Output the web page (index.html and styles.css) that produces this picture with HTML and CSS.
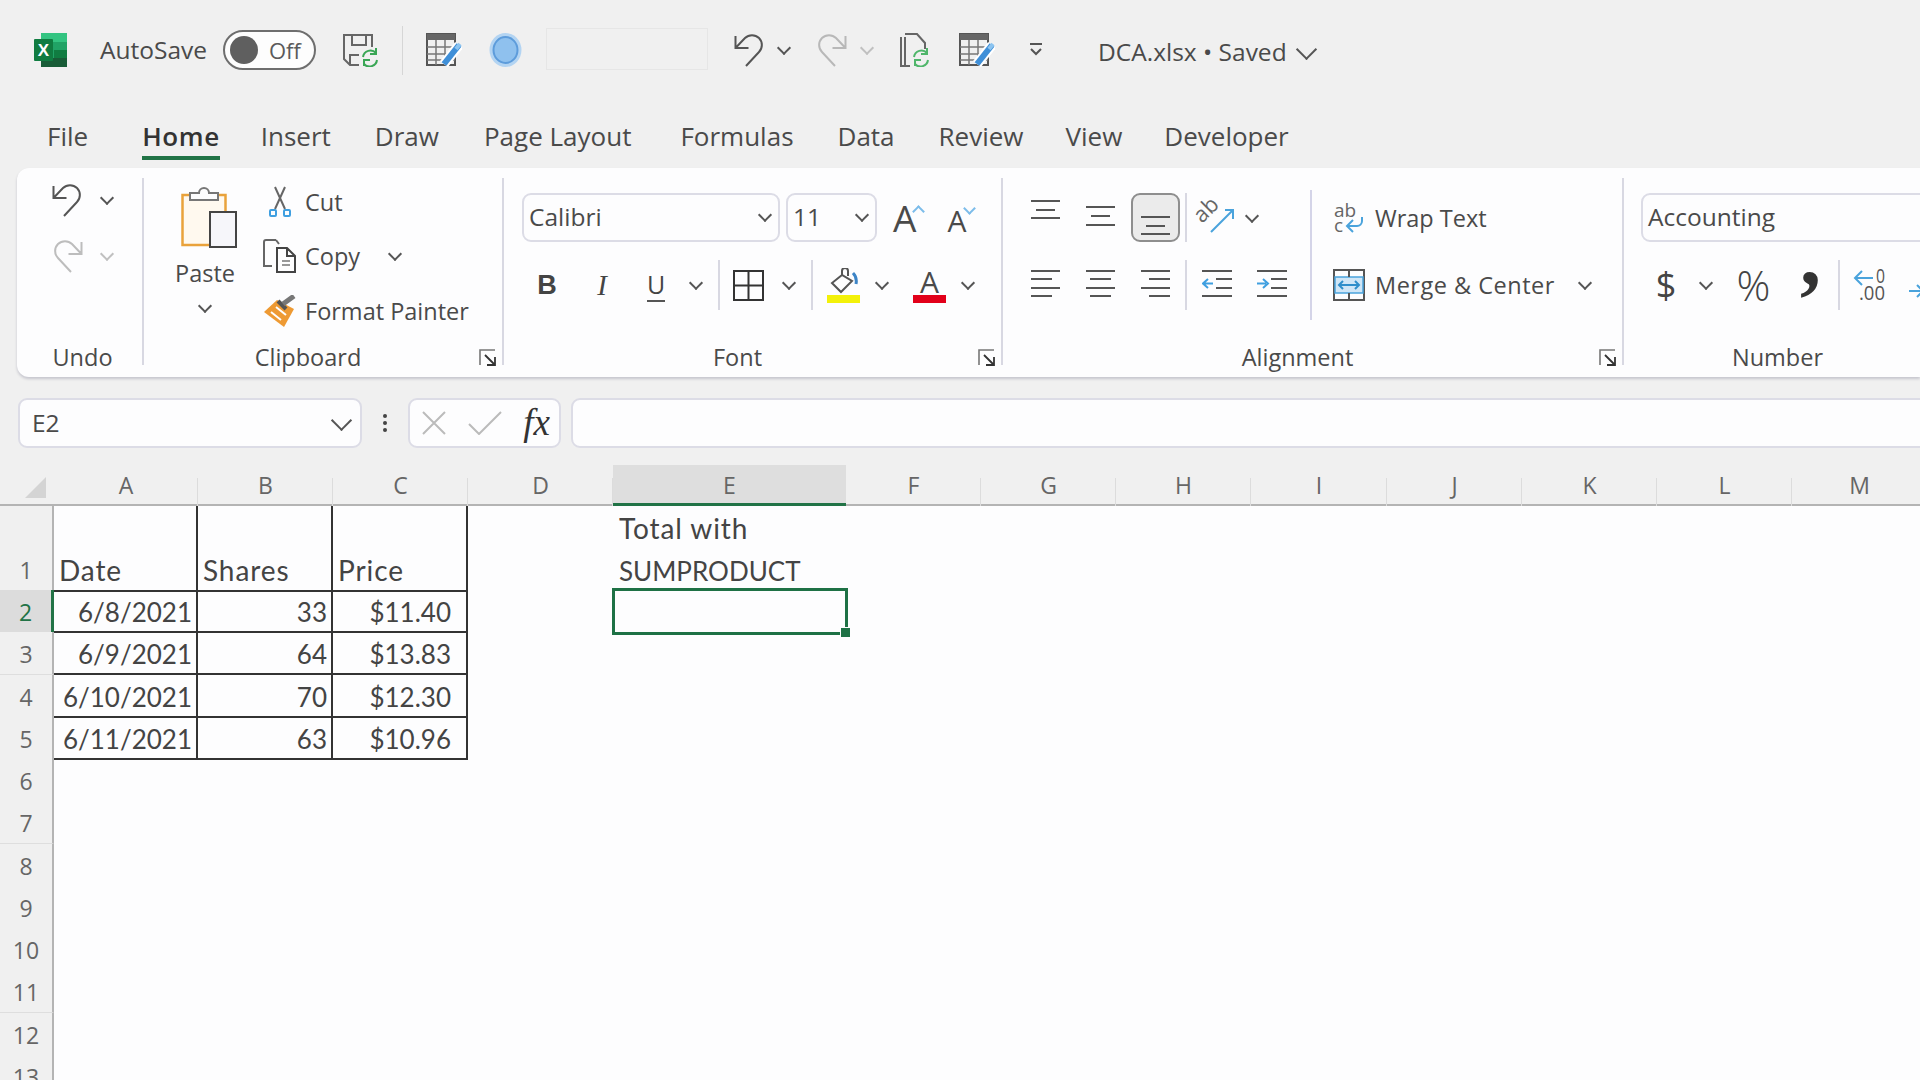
FILE: index.html
```html
<!DOCTYPE html>
<html lang="en">
<head>
    <meta charset="UTF-8">
    <title>DCA.xlsx - Excel</title>
    <link rel="stylesheet" href="styles.css">
</head>
<body>
    <!-- shared icons -->
    <svg class="defs" width="0" height="0">
        <symbol id="i-undo" viewBox="0 0 31 34">
            <path d="M1.5 3v12h13M1.5 15L11 5a10 10 0 0 1 14 0a10 10 0 0 1 0 14L12 33" fill="none" stroke="currentColor" stroke-width="2"/>
        </symbol>
        <symbol id="i-tablepen" viewBox="0 0 36 34">
            <rect x="1" y="1" width="28" height="31" fill="none" stroke="#555" stroke-width="2"/>
            <rect x="1" y="1" width="28" height="6" fill="#666"/>
            <path d="M1 14h28M1 21h28M1 27h28M10 7v25M19 7v25" stroke="#777" stroke-width="1.5"/>
            <path d="M33 12L18 31" stroke="#fff" stroke-width="10"/>
            <path d="M33 12L18 31" stroke="#3f8fd8" stroke-width="6"/>
            <path d="M34 11L30 16" stroke="#8cc4f0" stroke-width="4"/>
        </symbol>
        <symbol id="i-launcher" viewBox="0 0 17 17">
            <path d="M1 16V1h15" fill="none" stroke="#777" stroke-width="1.6"/>
            <path d="M6 6l10 10M16 8v8H8" fill="none" stroke="#333" stroke-width="1.8"/>
        </symbol>
        <symbol id="i-left" viewBox="0 0 29 50">
            <path d="M0 11h29M0 19h21M0 28h29M0 36h21" stroke="#555" stroke-width="2"/>
        </symbol>
        <symbol id="i-center" viewBox="0 0 29 50">
            <path d="M0 11h29M4 19h21M0 28h29M4 36h21" stroke="#555" stroke-width="2"/>
        </symbol>
        <symbol id="i-right" viewBox="0 0 29 50">
            <path d="M0 11h29M8 19h21M0 28h29M8 36h21" stroke="#555" stroke-width="2"/>
        </symbol>
    </svg>

    <!-- title bar -->
    <header class="titlebar">
        <svg class="logo" width="33" height="34" viewBox="0 0 33 34">
            <rect x="7" y="0" width="26" height="34" rx="2" fill="#21a366"/>
            <rect x="7" y="0" width="26" height="9" fill="#33c481"/>
            <rect x="7" y="25" width="26" height="9" fill="#185c37"/>
            <rect x="20" y="17" width="13" height="8" fill="#107c41"/>
            <rect x="0" y="6" width="19" height="22" rx="1" fill="#107c41"/>
            <text x="9.5" y="23" class="logo-x">X</text>
        </svg>
        <span class="autosave">AutoSave</span>
        <div class="toggle"><span class="knob"></span><span class="toggle-text">Off</span></div>
        <svg class="save-icon" width="37" height="34" viewBox="0 0 37 34">
            <path d="M16 32H7l-6-6V2h28v12M9 2v10h14V2M7 32V22h9" fill="none" stroke="#666" stroke-width="2"/>
            <path d="M20 24a7.500 7.500 0 0 1 13-4M34 27a7.500 7.500 0 0 1-13 4M33 15v6h-6M21 33v-6h6" fill="none" stroke="#3aa655" stroke-width="2"/>
        </svg>
        <span class="title-sep"></span>
        <svg class="pen-a" width="36" height="34"><use href="#i-tablepen"/></svg>
        <svg class="dot-icon" width="33" height="36" viewBox="0 0 33 36">
            <ellipse cx="16.500" cy="18" rx="16" ry="17" fill="#b3d4f2"/>
            <ellipse cx="16.500" cy="18" rx="12" ry="13" fill="#8fc1ee" stroke="#5d9cdb" stroke-width="2"/>
        </svg>
        <span class="blank-box"></span>
        <svg class="undo-a" width="35" height="34"><use href="#i-undo"/></svg>
        <span class="chev chev-a"></span>
        <svg class="redo-a" width="33" height="34"><use href="#i-undo"/></svg>
        <span class="chev off chev-b"></span>
        <svg class="doc-sync" width="33" height="34" viewBox="0 0 33 34">
            <path d="M5 33H1V4M5 4v29h5M5 1h12l8 9v6" fill="none" stroke="#666" stroke-width="2"/>
            <path d="M14 24a7.500 7.500 0 0 1 13-4M28 27a7.500 7.500 0 0 1-13 4M27 15v6h-6M15 33v-6h6" fill="none" stroke="#4fb66a" stroke-width="2"/>
        </svg>
        <svg class="pen-b" width="36" height="34"><use href="#i-tablepen"/></svg>
        <svg class="customise" width="16" height="16" viewBox="0 0 16 16">
            <path d="M2 2h12" stroke="#555" stroke-width="2"/>
            <path d="M3 7l5 5 5-5" fill="none" stroke="#555" stroke-width="2"/>
        </svg>
        <span class="doc-title">DCA.xlsx • Saved</span>
        <span class="chev big title-chev"></span>
    </header>

    <!-- tabs -->
    <nav class="tabs">
        <span class="tab tab-file">File</span>
        <span class="tab active">Home</span>
        <span class="tab tab-insert">Insert</span>
        <span class="tab">Draw</span>
        <span class="tab tab-page">Page Layout</span>
        <span class="tab tab-formulas">Formulas</span>
        <span class="tab">Data</span>
        <span class="tab">Review</span>
        <span class="tab tab-view">View</span>
        <span class="tab tab-dev">Developer</span>
    </nav>

    <!-- ribbon -->
    <section class="ribbon">
        <div class="group g-undo">
            <div class="group-body undo-body">
                <div class="undo-row">
                    <svg width="31" height="34"><use href="#i-undo"/></svg>
                    <span class="chev"></span>
                </div>
                <div class="undo-row disabled">
                    <svg class="mirror" width="31" height="34"><use href="#i-undo"/></svg>
                    <span class="chev off"></span>
                </div>
            </div>
            <div class="group-foot undo-foot"><span class="group-label">Undo</span></div>
        </div>

        <div class="group g-clip">
            <div class="group-body clip-body">
                <div class="paste">
                    <svg class="paste-icon" width="56" height="61" viewBox="0 0 56 61">
                        <rect x="1.500" y="8" width="43" height="50" fill="#fff9ef" stroke="#e9a23b" stroke-width="2.500"/>
                        <path d="M9 13V6h9a5 5 0 0 1 10 0h9v7z" fill="#fdfdfe" stroke="#777" stroke-width="2"/>
                        <rect x="29" y="25" width="26" height="35" fill="#f6f6fa" stroke="#444" stroke-width="2"/>
                    </svg>
                    <span class="paste-text">Paste</span>
                    <span class="chev"></span>
                </div>
                <div class="clip-actions">
                    <div class="clip-row">
                        <span class="clip-icon">
                            <svg width="22" height="32" viewBox="0 0 22 32">
                                <path d="M16 1L6 23M6 1l10 22" stroke="#666" stroke-width="2"/>
                                <rect x="1" y="24" width="6" height="6" rx="1" fill="none" stroke="#3f9fe0" stroke-width="2"/>
                                <rect x="15" y="24" width="6" height="6" rx="1" fill="none" stroke="#3f9fe0" stroke-width="2"/>
                            </svg>
                        </span>
                        <span>Cut</span>
                    </div>
                    <div class="clip-row">
                        <span class="clip-icon">
                            <svg width="34" height="34" viewBox="0 0 34 34">
                                <path d="M13 1H3a2 2 0 0 0-2 2v24h8M13 1l3 4" fill="none" stroke="#666" stroke-width="2"/>
                                <path d="M14 9h10l8 8v16H14zM24 9v8h8" fill="#fdfdfe" stroke="#444" stroke-width="2"/>
                                <path d="M19 22h8M19 26h8" stroke="#777" stroke-width="1.500"/>
                            </svg>
                        </span>
                        <span>Copy</span>
                        <span class="chev copy-chev"></span>
                    </div>
                    <div class="clip-row painter-row">
                        <span class="clip-icon">
                            <svg width="32" height="32" viewBox="0 0 32 32">
                                <path d="M0 17L13 5l17 9-10 18z" fill="#ee9a33"/>
                                <path d="M7 17l10 8M12 12l10 8" stroke="#fff" stroke-width="2"/>
                                <path d="M14 6l8 8" stroke="#555" stroke-width="4"/>
                                <path d="M19 9l11-8" stroke="#777" stroke-width="5"/>
                            </svg>
                        </span>
                        <span>Format Painter</span>
                    </div>
                </div>
            </div>
            <div class="group-foot">
                <span class="group-label">Clipboard</span>
                <svg class="launcher" width="17" height="17"><use href="#i-launcher"/></svg>
            </div>
        </div>

        <div class="group g-font">
            <div class="group-body font-body">
                <div class="font-top">
                    <div class="box font-name"><span>Calibri</span><span class="chev"></span></div>
                    <div class="box font-size"><span>11</span><span class="chev"></span></div>
                    <div class="grow grow-big"><span class="letter big-a">A</span><span class="chev blue up"></span></div>
                    <div class="grow grow-small"><span class="letter small-a">A</span><span class="chev blue"></span></div>
                </div>
                <div class="font-bottom">
                    <span class="fmt fmt-b">B</span>
                    <span class="fmt fmt-i">I</span>
                    <span class="fmt fmt-u">U</span>
                    <span class="chev"></span>
                    <span class="vsep"></span>
                    <svg width="31" height="31" viewBox="0 0 31 31">
                        <path d="M1 1h29v29H1zM15.500 1v29M1 15.500h29" fill="none" stroke="#333" stroke-width="2"/>
                    </svg>
                    <span class="chev"></span>
                    <span class="vsep"></span>
                    <div class="color-btn">
                        <svg width="28" height="26" viewBox="0 0 28 26">
                            <path d="M12 7L2 15l9 9 11-11zM12 7V3a3 3 0 0 1 6 0v5" fill="none" stroke="#555" stroke-width="2"/>
                            <path d="M23 5c3 3 4 6 3 11" fill="none" stroke="#3c84c6" stroke-width="3"/>
                        </svg>
                        <span class="color-bar yellow"></span>
                    </div>
                    <span class="chev"></span>
                    <div class="color-btn">
                        <span class="letter color-a">A</span>
                        <span class="color-bar red"></span>
                    </div>
                    <span class="chev"></span>
                </div>
            </div>
            <div class="group-foot">
                <span class="group-label">Font</span>
                <svg class="launcher" width="17" height="17"><use href="#i-launcher"/></svg>
            </div>
        </div>

        <div class="group g-align">
            <div class="group-body align-body">
                <div class="align-grid">
                    <svg width="29" height="49" viewBox="0 0 29 49"><path d="M0 8h29M5 17h19M0 25h29" stroke="#555" stroke-width="2"/></svg>
                    <svg width="29" height="49" viewBox="0 0 29 49"><path d="M0 14h29M5 23h19M0 32h29" stroke="#555" stroke-width="2"/></svg>
                    <div class="align-active">
                        <svg width="29" height="47" viewBox="0 0 29 47"><path d="M0 22h29M5 31h19M0 39h29" stroke="#555" stroke-width="2"/></svg>
                    </div>
                    <span class="vsep short"></span>
                    <svg class="orient" width="34" height="34" viewBox="0 0 34 34">
                        <text class="orient-text" transform="translate(2 23) rotate(-45)">ab</text>
                        <path d="M11 31L33 9M25 9h8v9" fill="none" stroke="#4aa3dc" stroke-width="2"/>
                    </svg>
                    <span class="chev orient-chev"></span>

                    <svg width="29" height="50"><use href="#i-left"/></svg>
                    <svg width="29" height="50"><use href="#i-center"/></svg>
                    <svg width="29" height="50"><use href="#i-right"/></svg>
                    <span class="vsep"></span>
                    <svg width="30" height="50" viewBox="0 0 30 50">
                        <path d="M0 11h30M14 19h16M14 28h16M0 36h30" stroke="#555" stroke-width="2"/>
                        <path d="M11 23.500H2M6 19l-5 4.500 5 4.500" fill="none" stroke="#3f9fe0" stroke-width="2"/>
                    </svg>
                    <svg width="30" height="50" viewBox="0 0 30 50">
                        <path d="M0 11h30M14 19h16M14 28h16M0 36h30" stroke="#555" stroke-width="2"/>
                        <path d="M0 23.500h9M6 19l5 4.500-5 4.500" fill="none" stroke="#3f9fe0" stroke-width="2"/>
                    </svg>
                </div>
                <span class="align-sep"></span>
                <div class="merge-col">
                    <div class="merge-row">
                        <span class="merge-icon">
                            <svg class="wrap-icon" width="30" height="31" viewBox="0 0 30 31">
                                <text class="wrap-text" x="0" y="14">ab</text>
                                <text class="wrap-text" x="0" y="29">c</text>
                                <path d="M28 14v4a5 5 0 0 1-5 5H13M19 17l-6 6 6 6" fill="none" stroke="#4aa3dc" stroke-width="2"/>
                            </svg>
                        </span>
                        <span>Wrap Text</span>
                    </div>
                    <div class="merge-row">
                        <span class="merge-icon">
                            <svg width="32" height="32" viewBox="0 0 32 32">
                                <rect x="1" y="1" width="30" height="30" fill="#fdfdfe" stroke="#555" stroke-width="2"/>
                                <rect x="2" y="8" width="28" height="16" fill="#cfe6f7" stroke="#4aa3dc" stroke-width="1.500"/>
                                <path d="M16 1v7M16 24v7" stroke="#555" stroke-width="2"/>
                                <path d="M6 16h20M10 12l-4 4 4 4M22 12l4 4-4 4" fill="none" stroke="#2f8ecb" stroke-width="2"/>
                            </svg>
                        </span>
                        <span class="merge-text">Merge &amp; Center</span>
                        <span class="chev merge-chev"></span>
                    </div>
                </div>
            </div>
            <div class="group-foot">
                <span class="group-label">Alignment</span>
                <svg class="launcher" width="17" height="17"><use href="#i-launcher"/></svg>
            </div>
        </div>

        <div class="group g-number">
            <div class="group-body number-body">
                <div class="box number-format"><span>Accounting</span></div>
                <div class="number-bottom">
                    <span class="fmt fmt-cur">$</span>
                    <span class="chev"></span>
                    <span class="fmt fmt-pct">%</span>
                    <span class="fmt fmt-comma">,</span>
                    <span class="vsep"></span>
                    <svg width="32" height="34" viewBox="0 0 32 34">
                        <path d="M20 10H2M9 3l-7 7 7 7" fill="none" stroke="#4aa3dc" stroke-width="2"/>
                        <text class="dec-text" x="23" y="15" textLength="9" lengthAdjust="spacingAndGlyphs">0</text>
                        <text class="dec-text" x="6" y="32" textLength="26" lengthAdjust="spacingAndGlyphs">.00</text>
                    </svg>
                    <svg width="32" height="34" viewBox="0 0 32 34">
                        <path d="M0 23h14M8 17l6 6-6 6" fill="none" stroke="#4aa3dc" stroke-width="2"/>
                    </svg>
                </div>
            </div>
            <div class="group-foot number-foot"><span class="group-label">Number</span></div>
        </div>
    </section>

    <!-- formula bar -->
    <div class="formula-row">
        <div class="box name-box"><span>E2</span><span class="chev big"></span></div>
        <div class="dots"><i></i><i></i><i></i></div>
        <div class="box fx-box">
            <svg width="24" height="24" viewBox="0 0 24 24"><path d="M1 1l22 22M23 1L1 23" stroke="#bbb" stroke-width="2"/></svg>
            <svg width="34" height="24" viewBox="0 0 34 24"><path d="M1 13l10 10L33 1" fill="none" stroke="#bbb" stroke-width="2"/></svg>
            <span class="fx">fx</span>
        </div>
        <div class="box formula-input"></div>
    </div>

    <!-- sheet -->
    <main class="sheet">
        <div class="col-heads">
            <span class="corner"><svg width="21" height="21" viewBox="0 0 21 21"><path d="M21 0v21H0z" fill="#d4d4d4"/></svg></span>
            <span class="col">A</span><span class="col">B</span><span class="col">C</span>
            <span class="col">D</span><span class="col selected">E</span><span class="col">F</span>
            <span class="col">G</span><span class="col">H</span><span class="col">I</span>
            <span class="col">J</span><span class="col">K</span><span class="col">L</span><span class="col">M</span>
        </div>

        <div class="row row-tall">
            <span class="row-head">1</span>
            <span class="cell bordered text">Date</span>
            <span class="cell bordered text">Shares</span>
            <span class="cell bordered text">Price</span>
            <span class="cell"></span>
            <span class="cell wrapped"><span class="text">Total with</span><br>SUMPRODUCT</span>
        </div>
        <div class="row">
            <span class="row-head current">2</span>
            <span class="cell bordered num">6/8/2021</span>
            <span class="cell bordered num">33</span>
            <span class="cell bordered num money">$11.40</span>
            <span class="cell"></span>
            <span class="cell active-cell"><span class="selection"><i class="handle"></i></span></span>
        </div>
        <div class="row">
            <span class="row-head">3</span>
            <span class="cell bordered num">6/9/2021</span>
            <span class="cell bordered num">64</span>
            <span class="cell bordered num money">$13.83</span>
        </div>
        <div class="row">
            <span class="row-head">4</span>
            <span class="cell bordered num">6/10/2021</span>
            <span class="cell bordered num">70</span>
            <span class="cell bordered num money">$12.30</span>
        </div>
        <div class="row">
            <span class="row-head">5</span>
            <span class="cell bordered num">6/11/2021</span>
            <span class="cell bordered num">63</span>
            <span class="cell bordered num money">$10.96</span>
        </div>
        <div class="row"><span class="row-head">6</span></div>
        <div class="row"><span class="row-head">7</span></div>
        <div class="row"><span class="row-head">8</span></div>
        <div class="row"><span class="row-head">9</span></div>
        <div class="row"><span class="row-head">10</span></div>
        <div class="row"><span class="row-head">11</span></div>
        <div class="row"><span class="row-head">12</span></div>
        <div class="row"><span class="row-head">13</span></div>
    </main>
</body>
</html>
```

FILE: styles.css
```css
* {
    box-sizing: border-box;
}

html, body {
    margin: 0;
    height: 1080px;
    overflow: hidden;
}

body {
    font-family: "Open Sans", sans-serif;
    font-size: 24.5px;
    color: #4a4a4a;
    background: #f0f0f0;
}

.defs {
    position: absolute;
}

svg {
    display: block;
    flex: none;
}

.mirror {
    transform: scaleX(-1);
}

/* chevrons */
.chev {
    display: flex;
    align-items: center;
    justify-content: center;
    flex: none;
    width: 12px;
    height: 12px;
}

.chev::before {
    content: "";
    width: 8px;
    height: 8px;
    margin-top: -4px;
    border-right: 2px solid #555;
    border-bottom: 2px solid #555;
    transform: rotate(45deg);
}

.chev.off::before {
    border-color: #c0c0c0;
}

.chev.big {
    width: 18px;
    height: 18px;
}

.chev.big::before {
    width: 13px;
    height: 13px;
}

.chev.blue::before {
    width: 7px;
    height: 7px;
    border-color: #7cbcea;
}

.chev.up {
    transform: rotate(180deg);
}

/* title bar */
.titlebar {
    display: flex;
    align-items: center;
    height: 100px;
    padding-left: 34px;
}

.logo-x {
    font: bold 17px "Liberation Sans", sans-serif;
    fill: #fff;
    text-anchor: middle;
}

.autosave {
    width: 108px;
    margin-left: 33px;
    margin-top: -1px;
    white-space: nowrap;
}

.toggle {
    display: flex;
    align-items: center;
    width: 93px;
    height: 40px;
    margin-left: 15px;
    padding-left: 5px;
    background: #fdfdfd;
    border: 2px solid #6e6e6e;
    border-radius: 20px;
}

.knob {
    width: 28px;
    height: 28px;
    background: #5f5f5f;
    border-radius: 50%;
}

.toggle-text {
    margin-left: 11px;
    font-size: 22px;
    color: #5a5a5a;
}

.save-icon { margin-left: 27px; }
.pen-a { margin-left: 23px; }
.dot-icon { margin-left: 27px; }
.undo-a { margin-left: 24px; color: #555; }
.chev-a { margin-left: 11px; }
.redo-a { margin-left: 25px; color: #b8b8b8; transform: scaleX(-1); }
.chev-b { margin-left: 13px; }
.doc-sync { margin-left: 27px; }
.pen-b { margin-left: 26px; }
.customise { margin-left: 33px; }

.title-sep {
    width: 1px;
    height: 49px;
    margin-left: 22px;
    background: #d6d6d6;
}

.blank-box {
    width: 162px;
    height: 42px;
    margin: -3px 0 0 24px;
    border: 1px solid #e6e6e6;
}

.doc-title {
    width: 188px;
    margin-left: 54px;
    margin-top: 2px;
    white-space: nowrap;
}

.title-chev {
    margin-left: 11px;
    margin-top: 2px;
}

/* tabs */
.tabs {
    display: flex;
    gap: 44px;
    height: 68px;
    padding: 20px 0 0 47px;
    font-size: 26px;
}

.tab {
    height: 40px;
    line-height: 32px;
    white-space: nowrap;
}

.tab-file { margin-right: 10px; }
.tab-insert { margin-left: -3px; }
.tab-page { margin-left: 1px; }
.tab-formulas { margin-left: 5px; }
.tab-view { margin-left: -2px; }
.tab-dev { margin-left: -2px; }

.tab.active {
    color: #333;
    font-weight: 600;
    letter-spacing: 0.6px;
    border-bottom: 4px solid #217346;
}

/* ribbon */
.ribbon {
    display: flex;
    height: 209px;
    margin-left: 17px;
    padding: 10px 0 12px;
    background: #fdfdfe;
    border-radius: 12px 0 0 12px;
    box-shadow: 0 2px 3px rgba(0, 0, 50, 0.18);
}

.group {
    display: flex;
    flex-direction: column;
    flex: none;
    height: 187px;
    border-right: 2px solid #d8d8e2;
}

.g-undo { width: 127px; }
.g-clip { width: 360px; }
.g-font { width: 499px; }
.g-align { width: 621px; }

.g-number {
    flex: 1;
    min-width: 0;
    border-right: none;
}

.group-body {
    flex: 1;
    min-height: 0;
}

.group-foot {
    display: flex;
    align-items: center;
    flex: none;
    height: 24px;
    margin-bottom: -4px;
}

.group-label {
    flex: 1;
    font-size: 23.5px;
    line-height: 24px;
    text-align: center;
    white-space: nowrap;
}

.launcher {
    margin: 0 6px 0 7px;
}

.undo-foot {
    padding-left: 6px;
}

.number-foot {
    padding-left: 11px;
}

/* undo group */
.undo-body {
    display: flex;
    flex-direction: column;
    gap: 22px;
    padding: 5px 0 0 35px;
}

.undo-row {
    display: flex;
    align-items: center;
    gap: 18px;
    color: #555;
}

.undo-row.disabled {
    color: #bdbdbd;
}

/* clipboard group */
.clip-body {
    display: flex;
}

.paste {
    display: flex;
    flex-direction: column;
    align-items: center;
    width: 70px;
    margin-left: 26px;
    padding-top: 9px;
}

.paste-icon {
    margin-left: 8px;
}

.paste-text {
    margin-top: 11px;
    font-size: 23.5px;
    line-height: 28px;
}

.paste .chev {
    margin-top: 15px;
}

.clip-actions {
    display: flex;
    flex-direction: column;
    gap: 20px;
    margin-left: 23px;
    padding-top: 7px;
}

.clip-row {
    display: flex;
    align-items: center;
    height: 34px;
    font-size: 23.5px;
    white-space: nowrap;
}

.painter-row {
    margin-top: 1px;
}

.clip-icon {
    display: flex;
    justify-content: center;
    width: 34px;
    margin-right: 8px;
}

.copy-chev {
    margin-left: 29px;
}

/* font group */
.box {
    display: flex;
    align-items: center;
    justify-content: space-between;
    flex: none;
    height: 49px;
    padding: 0 7px 2px 5px;
    background: #fdfdfe;
    border: 2px solid #dcdce6;
    border-radius: 9px;
}

.font-body {
    padding-top: 15px;
}

.font-top {
    display: flex;
    align-items: center;
    height: 49px;
    padding-left: 18px;
}

.font-name { width: 258px; }
.font-size { width: 91px; margin-left: 6px; }

.grow {
    display: flex;
    align-items: flex-start;
}

.grow-big { margin-left: 16px; }
.grow-small { margin-left: 22px; }

.letter {
    font-weight: 400;
    line-height: 1;
}

.big-a { font-size: 37px; }
.small-a { font-size: 30px; margin-top: 6px; }

.grow .chev {
    margin: 5px 0 0 -3px;
}

.font-bottom {
    display: grid;
    grid-template-columns: 44px 66px 42px 38px 8px 51px 30px 16px 47px 30px 65px 12px;
    align-items: center;
    justify-items: center;
    height: 50px;
    margin: 18px 0 0 21px;
}

.vsep {
    width: 2px;
    height: 50px;
    background: #d8d8e2;
}

.vsep.short {
    height: 49px;
}

.fmt {
    line-height: 34px;
    color: #444;
}

.fmt-b {
    font-family: "Liberation Sans", sans-serif;
    font-weight: 700;
    font-size: 27px;
}

.fmt-i {
    font-family: "Liberation Serif", serif;
    font-style: italic;
    font-size: 29px;
}

.fmt-u {
    font-size: 25px;
    line-height: 31px;
    border-bottom: 2px solid #555;
}

.color-btn {
    display: flex;
    flex-direction: column;
    align-items: center;
    height: 35px;
}

.color-a {
    font-size: 30px;
    height: 26px;
    line-height: 27px;
}

.color-bar {
    width: 33px;
    height: 8px;
    margin-top: 1px;
}

.yellow { background: #f3f10a; }
.red { background: #e2001a; }

/* alignment group */
.align-body {
    display: flex;
    padding-top: 12px;
}

.align-grid {
    display: grid;
    grid-template-columns: 55px 55px 55px 6px 55px 56px;
    grid-template-rows: 49px 50px;
    row-gap: 18px;
    align-items: center;
    justify-items: center;
    margin: 3px 0 0 15px;
}

.align-active {
    width: 49px;
    height: 49px;
    background: #ebebeb;
    border: 2px solid #8e8e8e;
    border-radius: 9px;
    display: flex;
    justify-content: center;
}

.orient, .wrap-icon {
    overflow: visible;
}

.orient-text {
    font-size: 22px;
    fill: #666;
}

.orient-chev {
    justify-self: start;
    margin-left: 2px;
}

.align-sep {
    flex: none;
    width: 2px;
    height: 130px;
    margin-left: 10px;
    background: #d4d4e8;
}

.merge-col {
    display: grid;
    grid-template-rows: 50px 50px;
    row-gap: 17px;
    margin-top: 3px;
    padding-left: 20px;
}

.merge-row {
    display: flex;
    align-items: center;
    font-size: 23.5px;
    white-space: nowrap;
}

.merge-icon {
    display: flex;
    justify-content: center;
    width: 34px;
    margin-right: 9px;
}

.merge-text {
    letter-spacing: 0.5px;
}

.wrap-text {
    font-size: 19px;
    fill: #666;
}

.merge-chev {
    margin-left: 24px;
}

/* number group */
.number-body {
    min-width: 0;
    overflow: hidden;
    padding-top: 15px;
}

.number-format {
    width: 400px;
    margin-left: 17px;
}

.number-bottom {
    display: grid;
    grid-template-columns: 50px 30px 65px 49px 8px 51px 62px;
    align-items: center;
    justify-items: center;
    height: 50px;
    margin: 18px 0 0 17px;
}

.fmt-cur {
    font-size: 36px;
}

.fmt-pct {
    font-size: 42px;
    font-weight: 300;
}

.fmt-comma {
    font-family: "Liberation Serif", serif;
    font-weight: 700;
    font-size: 84px;
    line-height: 1;
    margin-top: -58px;
    color: #333;
}

.dec-text {
    font-size: 20px;
    fill: #555;
}

/* formula bar */
.formula-row {
    display: flex;
    height: 50px;
    margin-top: 21px;
    padding-left: 18px;
    overflow: hidden;
}

.name-box {
    width: 344px;
    height: 50px;
    padding: 0 10px 2px 12px;
}

.dots {
    display: flex;
    flex: none;
    flex-direction: column;
    align-items: center;
    justify-content: center;
    gap: 3px;
    width: 46px;
}

.dots i {
    width: 4px;
    height: 4px;
    background: #444;
    border-radius: 50%;
}

.fx-box {
    width: 153px;
    height: 50px;
    padding: 0 9px 0 12px;
}

.fx {
    font-family: "Liberation Serif", serif;
    font-style: italic;
    font-size: 37px;
    line-height: 40px;
    color: #333;
}

.formula-input {
    width: 1400px;
    height: 50px;
    margin-left: 10px;
}

/* sheet */
.sheet {
    margin-top: 17px;
    overflow: hidden;
    background: #fdfdfe;
    font-family: Lato, sans-serif;
    font-size: 26px;
    color: #444;
}

.col-heads {
    display: grid;
    grid-template-columns: 54px 144px 135px 135px 145px 233px 135px 135px 135px 136px 135px 135px 135px 135px;
    height: 41px;
    background: #f0f0f0;
    border-bottom: 2px solid #b4b4b4;
    font-family: "Open Sans", sans-serif;
    font-size: 23px;
    color: #666;
}

.corner {
    display: flex;
    justify-content: flex-end;
    padding: 12px 8px 0 0;
}

.col {
    padding-top: 5px;
    line-height: 30px;
    text-align: center;
    background: linear-gradient(#dcdcdc, #dcdcdc) right bottom / 1px 28px no-repeat;
}

.col.selected {
    height: 41px;
    background: #dedede;
    border-bottom: 3px solid #217346;
}

.row {
    display: grid;
    grid-template-columns: 54px 144px 135px 135px 145px 233px;
    height: 42.25px;
}

.row-tall {
    height: 84px;
}

.row-head {
    padding-top: 2px;
    font-family: "Open Sans", sans-serif;
    font-size: 23px;
    line-height: 40px;
    text-align: center;
    color: #666;
    background: #f0f0f0;
    border-right: 2px solid #b4b4b4;
    border-bottom: 1px solid #dedede;
}

.row-tall .row-head {
    padding-top: 44px;
}

.row-head.current {
    color: #217346;
    background: #dcdcdc;
    border-right: 3px solid #217346;
}

.cell {
    padding: 3px 4px 0 5px;
    line-height: 38px;
    white-space: nowrap;
}

.row-tall .cell {
    align-self: end;
}

.text {
    font-size: 28px;
    letter-spacing: 0.9px;
}

.bordered {
    border-right: 2px solid #333;
    border-bottom: 2px solid #333;
}

.row-tall .bordered {
    align-self: stretch;
    padding-top: 45px;
}

.num {
    text-align: right;
}

.money {
    padding-right: 15px;
}

.cell.wrapped {
    padding-top: 1px;
    padding-left: 6px;
    line-height: 42px;
}

.active-cell {
    position: relative;
}

.selection {
    position: absolute;
    left: -1px;
    top: -2px;
    width: 236px;
    height: 47px;
    border: 3px solid #1e7145;
}

.handle {
    position: absolute;
    right: -5px;
    bottom: -5px;
    width: 9px;
    height: 9px;
    background: #1e7145;
    outline: 1px solid #fdfdfe;
}
```
